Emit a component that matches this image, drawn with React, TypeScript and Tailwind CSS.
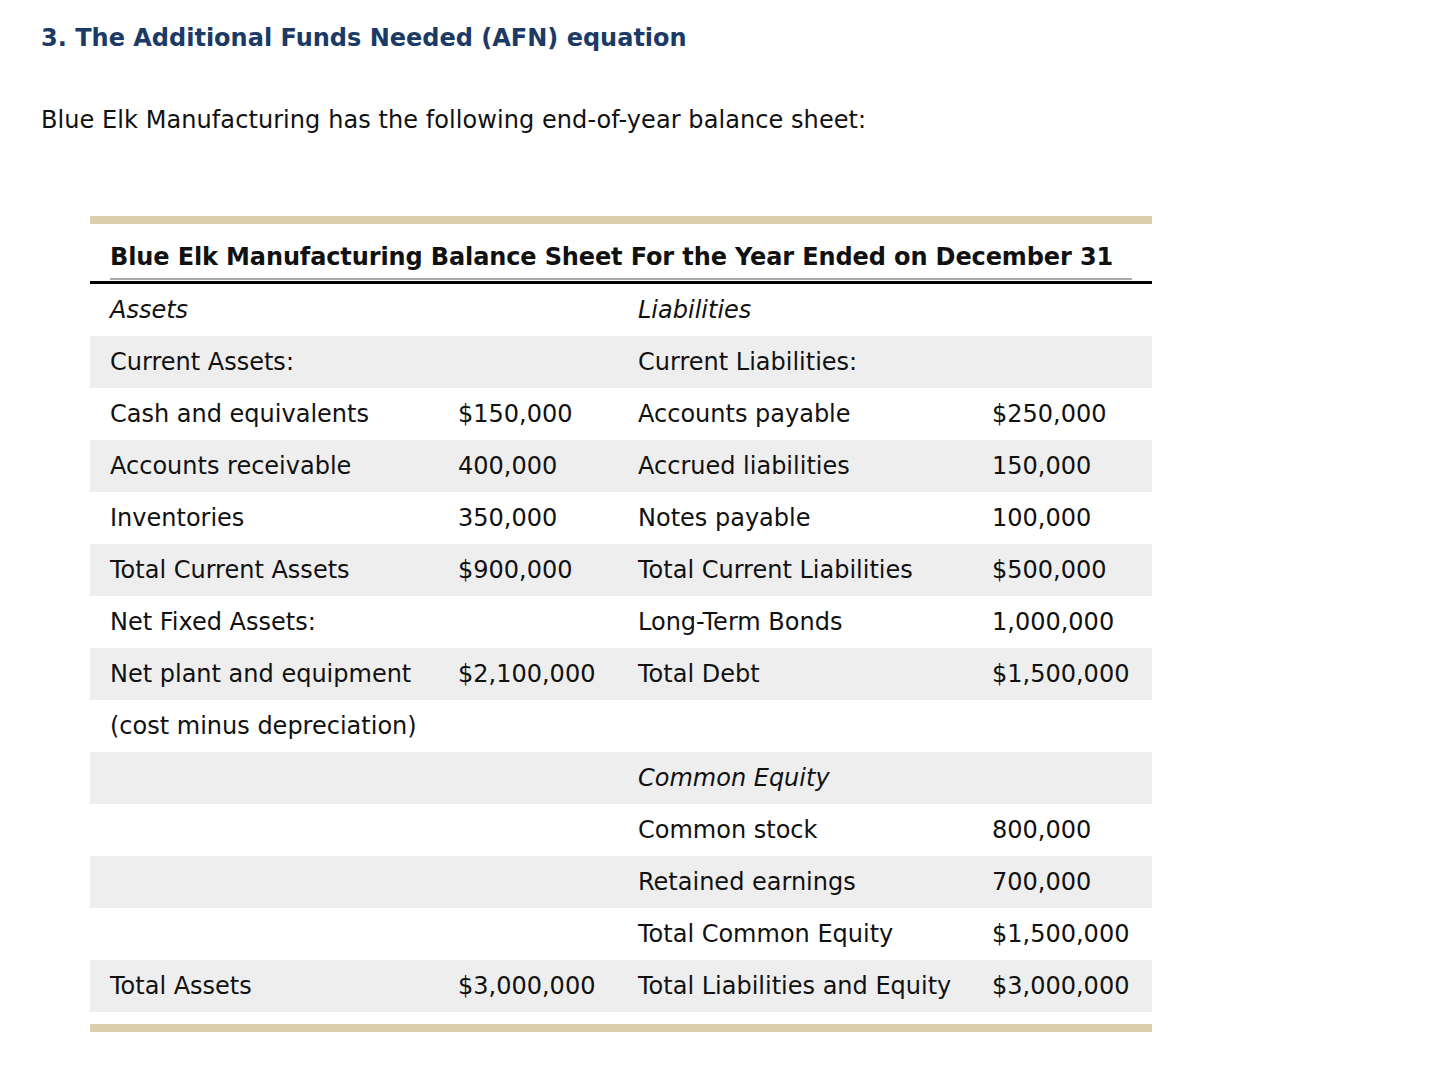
import React from "react";

type Row = [string, string, string, string, boolean?, boolean?];

const rows: Row[] = [
  ["Assets", "", "Liabilities", "", true, true],
  ["Current Assets:", "", "Current Liabilities:", ""],
  ["Cash and equivalents", "$150,000", "Accounts payable", "$250,000"],
  ["Accounts receivable", "400,000", "Accrued liabilities", "150,000"],
  ["Inventories", "350,000", "Notes payable", "100,000"],
  ["Total Current Assets", "$900,000", "Total Current Liabilities", "$500,000"],
  ["Net Fixed Assets:", "", "Long-Term Bonds", "1,000,000"],
  ["Net plant and equipment", "$2,100,000", "Total Debt", "$1,500,000"],
  ["(cost minus depreciation)", "", "", ""],
  ["", "", "Common Equity", "", false, true],
  ["", "", "Common stock", "800,000"],
  ["", "", "Retained earnings", "700,000"],
  ["", "", "Total Common Equity", "$1,500,000"],
  ["Total Assets", "$3,000,000", "Total Liabilities and Equity", "$3,000,000"],
];

export default function App() {
  return (
    <div
      className="min-h-[1070px] bg-white pl-[41px] pt-[24px] text-[24px] leading-[28px] text-[#111]"
      style={{ fontFamily: '"DejaVu Sans", Verdana, sans-serif' }}
    >
      <h1 className="text-[24px] font-bold leading-[28px] text-[#1b3a66]">
        3. The Additional Funds Needed (AFN) equation
      </h1>
      <p className="mt-[54px] tracking-[0.07px]">
        Blue Elk Manufacturing has the following end-of-year balance sheet:
      </p>
      <div className="ml-[49px] mt-[82px] w-[1062px] border-t-[8px] border-b-[8px] border-[#d9cfab] pb-[12px]">
        <div className="mx-[20px] border-b-2 border-[#aaaaaa] pb-[7px] pt-[19px] font-bold tracking-[-0.12px]">
          Blue Elk Manufacturing Balance Sheet For the Year Ended on December 31
        </div>
        <div className="mt-[1px] h-[3px] bg-black" />
        {rows.map((r, i) => (
          <div
            key={i}
            className={`grid h-[52px] grid-cols-[348px_180px_354px_180px] items-center ${
              i % 2 === 1 ? "bg-[#eeeeee]" : "bg-white"
            }`}
          >
            <div className={`pl-[20px] whitespace-nowrap ${r[4] ? "italic" : ""}`}>{r[0]}</div>
            <div className="pl-[20px] whitespace-nowrap">{r[1]}</div>
            <div className={`pl-[20px] whitespace-nowrap ${r[5] ? "italic" : ""}`}>{r[2]}</div>
            <div className="pl-[20px] whitespace-nowrap">{r[3]}</div>
          </div>
        ))}
      </div>
    </div>
  );
}
